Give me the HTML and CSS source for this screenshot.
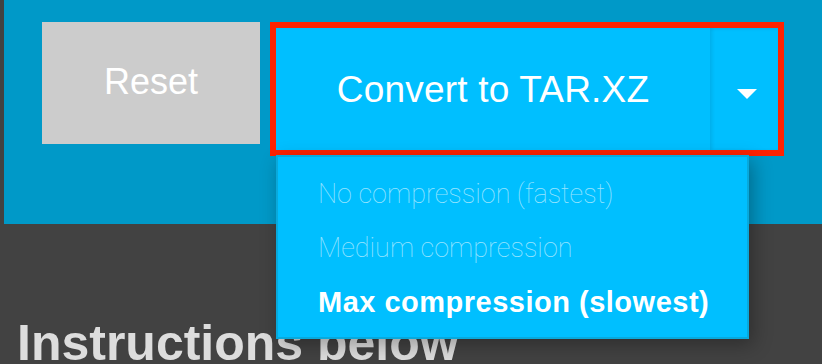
FILE: index.html
```html
<!DOCTYPE html>
<html lang="en">
<head>
    <meta charset="UTF-8">
    <meta name="viewport" content="width=device-width, initial-scale=1.0">
    <title>Convert to TAR.XZ</title>
    <link rel="stylesheet" href="styles.css">
</head>
<body>
    <div class="panel">
        <button class="reset">Reset</button>
        <div class="convert-group">
            <button class="convert">Convert to TAR.XZ</button>
            <button class="toggle"><span class="arrow"></span></button>
            <ul class="menu">
                <li class="option">No compression (fastest)</li>
                <li class="option">Medium compression</li>
                <li class="option selected">Max compression (slowest)</li>
            </ul>
        </div>
    </div>

    <h2 class="instructions">Instructions below</h2>
</body>
</html>
```

FILE: styles.css
```css
body {
    margin: 0;
    background-color: #424242;
    font-family: "Liberation Sans", Arial, sans-serif;
    overflow: hidden;
}

.panel {
    margin-left: 4px;
    height: 224px;
    box-sizing: border-box;
    padding: 22px 0 0 38px;
    background-color: #0099c8;
    display: flex;
    align-items: flex-start;
    gap: 10px;
}

button {
    font-family: inherit;
    border: none;
    color: white;
    cursor: pointer;
}

.reset {
    width: 218px;
    height: 122px;
    background-color: #cccccc;
    font-size: 36px;
    padding: 0 0 2px;
}

.convert-group {
    position: relative;
    display: flex;
    border: 6px solid #ff2200;
}

.convert {
    width: 434px;
    height: 122px;
    background-color: #00bfff;
    font-size: 37px;
    letter-spacing: 0.2px;
    padding: 2px 0 0;
}

.toggle {
    width: 68px;
    height: 122px;
    background-color: #00bfff;
    box-shadow: inset 3px 0 3px rgba(0, 0, 0, 0.06), inset 0 2px 3px rgba(0, 0, 0, 0.04);
    display: flex;
    justify-content: center;
    align-items: center;
    padding: 10px 0 0 5px;
}

.arrow {
    width: 0;
    height: 0;
    border-left: 10px solid transparent;
    border-right: 10px solid transparent;
    border-top: 10px solid white;
}

.menu {
    position: absolute;
    left: 0;
    top: calc(100% + 5px);
    z-index: 2;
    width: 473px;
    height: 184px;
    box-sizing: border-box;
    margin: 0;
    padding: 10px 0 0 40px;
    list-style: none;
    background-color: #00bfff;
    border: 2px solid #08a9dc;
    box-shadow: 4px 6px 18px rgba(0, 0, 0, 0.3);
}

.option {
    height: 54px;
    line-height: 54px;
    font-family: Roboto, sans-serif;
    font-weight: 100;
    font-size: 27px;
    color: rgba(255, 255, 255, 0.6);
}

.option.selected {
    font-family: "Liberation Sans", Arial, sans-serif;
    font-weight: bold;
    font-size: 29px;
    letter-spacing: 0.5px;
    color: white;
}

.instructions {
    margin: 90px 0 0 17px;
    font-size: 50px;
    color: #dddddd;
}
```
